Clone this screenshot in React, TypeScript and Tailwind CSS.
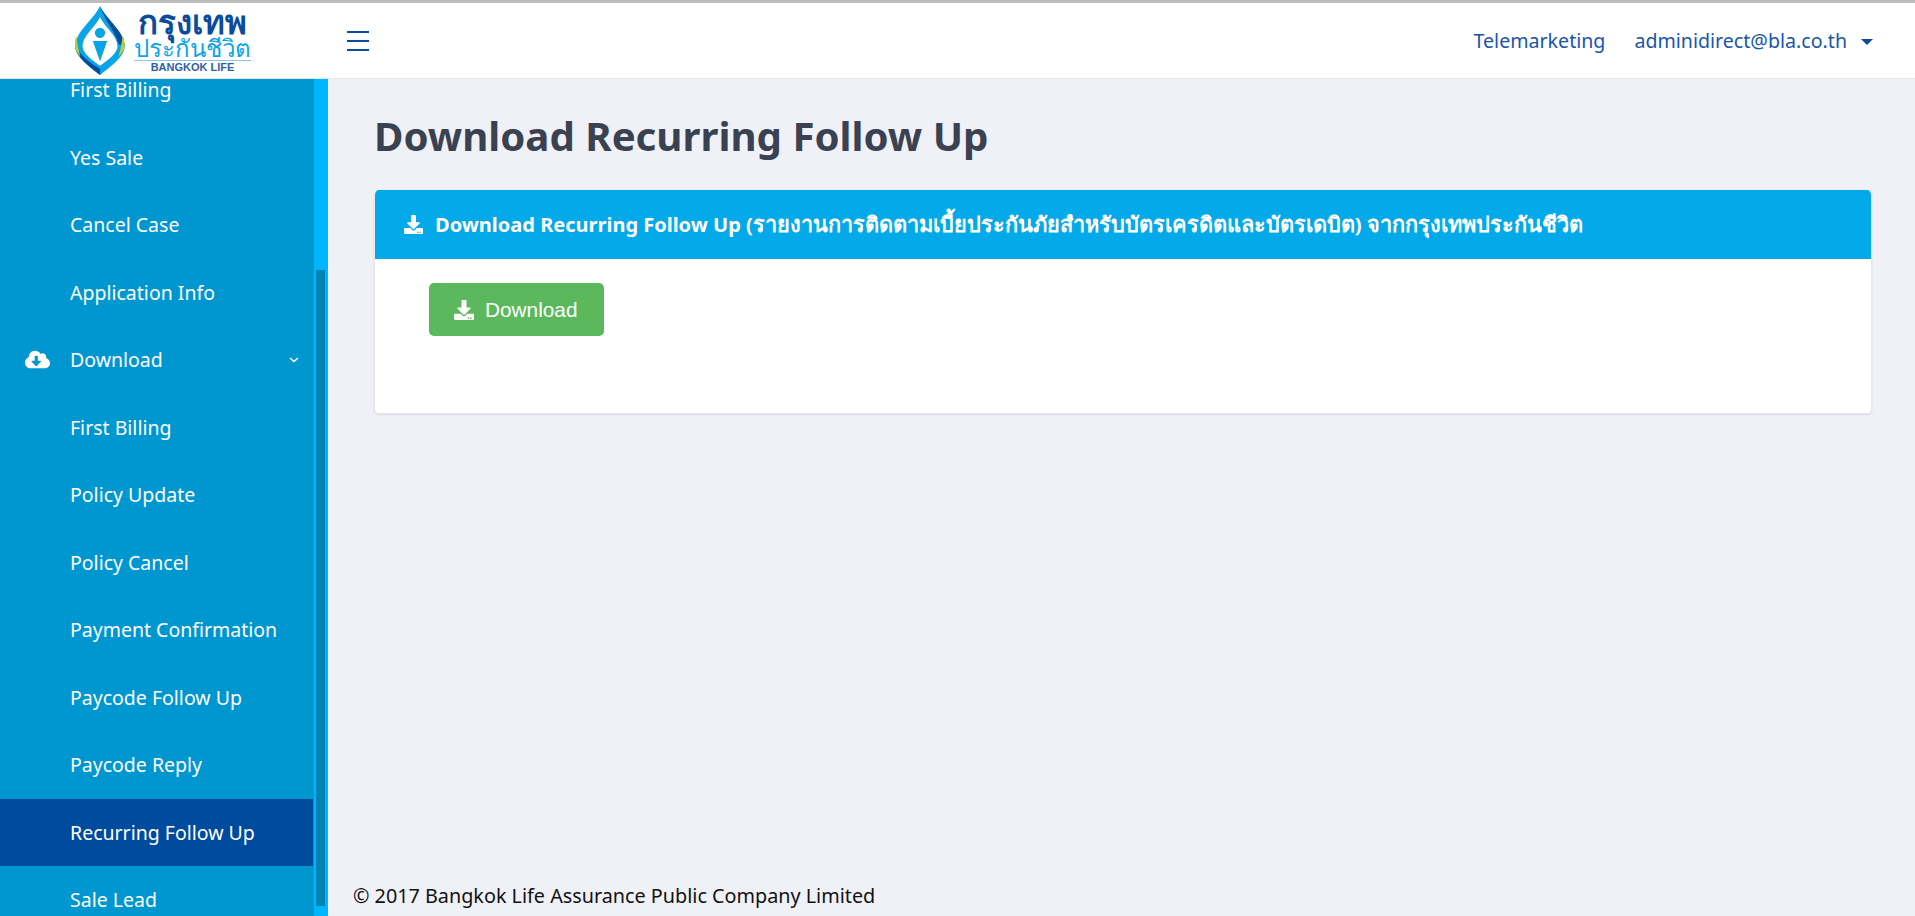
import { FC } from "react";
import { FaDownload, FaCloudDownloadAlt } from "react-icons/fa";

const font = "font-['Noto_Sans','Open_Sans',sans-serif]";

const menuItems = [
  { label: "First Billing" },
  { label: "Yes Sale" },
  { label: "Cancel Case" },
  { label: "Application Info" },
  { label: "Download", parent: true },
  { label: "First Billing" },
  { label: "Policy Update" },
  { label: "Policy Cancel" },
  { label: "Payment Confirmation" },
  { label: "Paycode Follow Up" },
  { label: "Paycode Reply" },
  { label: "Recurring Follow Up", active: true },
  { label: "Sale Lead" },
];

const Logo: FC = () => (
  <div className="flex items-center ml-[73px] w-[254px] shrink-0">
    <svg width="54" height="72" viewBox="0 0 52 70" className="shrink-0">
      <path d="M26 1 C32 14 50 26 50 40 C50 50 36 60 26 68 C16 60 2 50 2 40 C2 26 20 14 26 1Z" fill="#0aa5e6" />
      <path d="M26 1 C32 14 50 26 50 40 L44 38 C42 28 32 18 26 1Z" fill="#0b4b9b" />
      <path d="M2 40 C2 50 16 60 26 68 L26 62 C16 56 8 50 2 40Z" fill="#0b4b9b" />
      <path d="M48 30 C52 38 50 46 44 50 C46 44 47 38 48 30Z" fill="#b5cf3b" />
      <path d="M3 30 C0 38 2 46 7 50 C5 44 4 38 3 30Z" fill="#b5cf3b" />
      <path d="M26 12 C31 22 43 30 43 40 C43 47 33 54 26 59 C19 54 9 47 9 40 C9 30 21 22 26 12Z" fill="#ffffff" />
      <circle cx="26" cy="27" r="5" fill="#0aa5e6" />
      <path d="M19 35 H33 L26 55Z" fill="#0aa5e6" />
    </svg>
    <div className="flex flex-col items-center ml-[7px] font-['Noto_Sans','Liberation_Sans',sans-serif]">
      <span className="text-[33px] leading-[29px] font-bold text-[#0b4b9b]">กรุงเทพ</span>
      <span className="text-[24px] leading-[24px] text-[#0aa5e6] border-b border-[#8fc4ea]">ประกันชีวิต</span>
      <span className="text-[11px] leading-[13px] font-bold text-[#2f5f9f] font-['Liberation_Sans',sans-serif]">BANGKOK LIFE</span>
    </div>
  </div>
);

const Sidebar: FC = () => (
  <aside className="w-[328px] shrink-0 bg-[#00b4ff] flex overflow-hidden">
    <ul className="w-[314px] shrink-0 bg-[#0096cf] -mt-[23px] h-fit">
      {menuItems.map((item, index) => (
        <li
          key={index}
          className={`relative flex items-center h-[67.5px] mr-px pl-[70px] text-[19.5px] text-white ${
            item.active ? "bg-[#004b9d]" : ""
          }`}
        >
          {item.parent && (
            <>
              <FaCloudDownloadAlt className="absolute left-[25px] text-[25px]" />
              <svg width="10" height="6" viewBox="0 0 10 6" className="absolute right-[14px]">
                <path d="M1 1 L5 4.5 L9 1" fill="none" stroke="white" strokeWidth="1.6" />
              </svg>
            </>
          )}
          {item.label}
        </li>
      ))}
    </ul>
    <div className="flex-1 pl-[2px] pr-[3px] pt-[191px] pb-[10px]">
      <div className="h-full bg-[#0082b5]" />
    </div>
  </aside>
);

export default function App() {
  return (
    <div className={`h-screen flex flex-col overflow-hidden bg-[#f0f1f7] ${font}`}>
      <header className="h-[79px] shrink-0 flex items-center bg-white border-t-[3px] border-t-[#bdbdbd] border-b border-b-[#e4e6ea] text-[#0b4b9b]">
        <Logo />
        <svg width="24" height="22" viewBox="0 0 24 22" className="ml-[19px]">
          <path d="M1 2 H23 M1 11 H23 M1 20 H23" stroke="#0b4b9b" strokeWidth="2" />
        </svg>
        <div className="ml-auto flex items-center pr-[42px] text-[19.6px] text-[#1a56a8]">
          <span>Telemarketing</span>
          <span className="ml-[29px]">adminidirect@bla.co.th</span>
          <span className="ml-[14px] mt-[3px] w-0 h-0 border-x-[6px] border-x-transparent border-t-[6px] border-t-[#0b4b9b]" />
        </div>
      </header>

      <div className="flex-1 flex min-h-0">
        <Sidebar />
        <main className="flex-1 flex flex-col min-w-0">
          <div className="flex-1 pl-[46px] pr-[43px]">
            <h1 className="text-[40.2px] leading-[54px] font-bold text-[#3a4151] mt-[30px] mb-[27px]">
              Download Recurring Follow Up
            </h1>
            <section className="bg-white rounded-[5px] border-x border-b border-[#e6e8ee] shadow-[0_1px_2px_rgba(0,0,0,0.1)] overflow-hidden h-[224px]">
              <div className="h-[69px] flex items-center pl-[29px] bg-[#03a9e8] text-white text-[20px] font-bold">
                <FaDownload className="text-[19px] mr-[12px]" />
                <span>
                  Download Recurring Follow Up (
                  <span className="text-[21.7px]">รายงานการติดตามเบี้ยประกันภัยสำหรับบัตรเครดิตและบัตรเดบิต</span>
                  ) <span className="text-[21.7px]">จากกรุงเทพประกันชีวิต</span>
                </span>
              </div>
              <div className="pl-[54px] pt-[24px]">
                <button className="flex items-center h-[53px] w-[175px] pl-[25px] rounded-[5px] bg-[#5cb85c] text-white text-[20.8px] font-['Liberation_Sans',sans-serif]">
                  <FaDownload className="text-[20px] mr-[11px]" />
                  Download
                </button>
              </div>
            </section>
          </div>
          <footer className="h-[40px] shrink-0 pl-[25px] text-[19.8px] leading-[40px] text-[#111111]">
            © 2017 Bangkok Life Assurance Public Company Limited
          </footer>
        </main>
      </div>
    </div>
  );
}
